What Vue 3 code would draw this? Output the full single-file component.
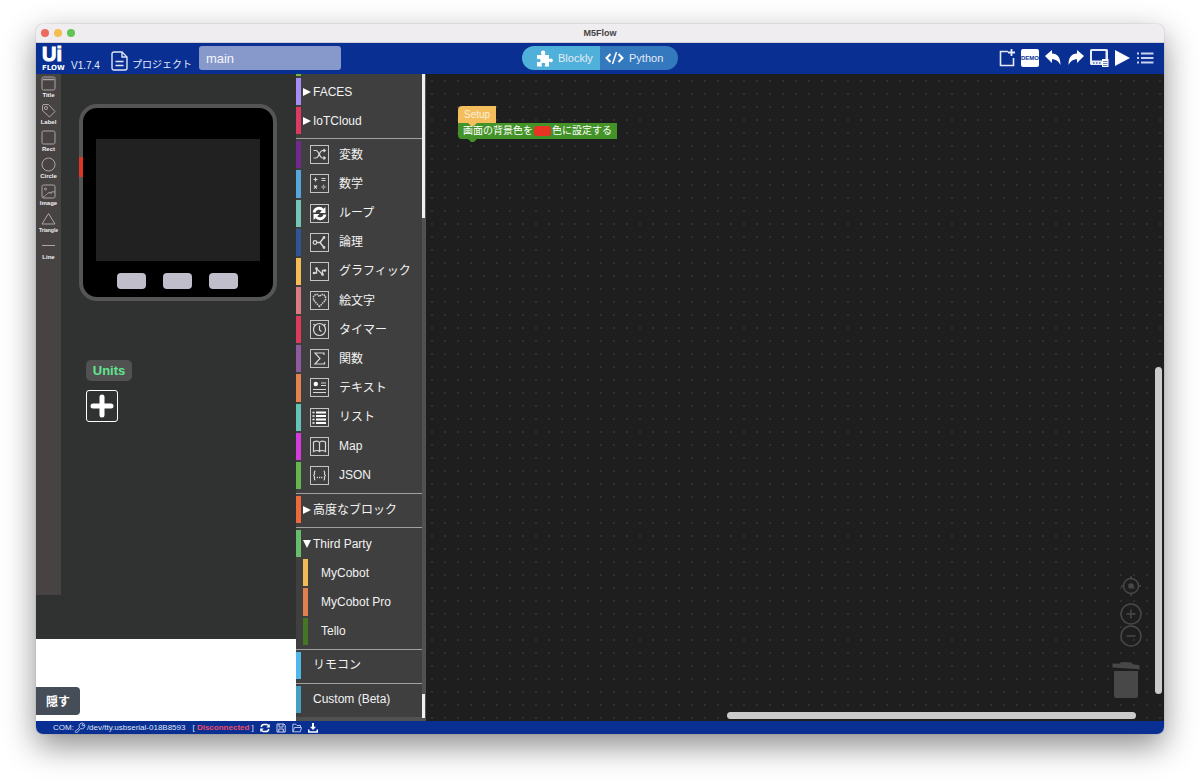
<template>
  <div class="desktop">
    <div class="window">
      <div class="titlebar">
        <div class="lights">
          <span class="light red"></span>
          <span class="light yellow"></span>
          <span class="light green"></span>
        </div>
        <span class="title">M5Flow</span>
      </div>

      <header class="header">
        <div class="header-left">
          <div class="logo">
            <span class="logo-ui">Ui</span>
            <span class="logo-flow">FLOW</span>
          </div>
          <span class="version">V1.7.4</span>
          <label class="project" for="projectName">
            <svg width="17" height="20" viewBox="0 0 17 20" fill="none" stroke="#dfe5f5" stroke-width="1.4">
              <path d="M3 1h8l5 5v11a2 2 0 0 1-2 2H3a2 2 0 0 1-2-2V3a2 2 0 0 1 2-2z" />
              <path d="M11 1v5h5M4.500 10.500h8M4.500 14.500h8" />
            </svg>
            <span>プロジェクト</span>
          </label>
          <input id="projectName" v-model="projectName" class="project-name" type="text" />
        </div>

        <div class="modes">
          <button class="mode" :class="{ active: mode === 'blockly' }" @click="mode = 'blockly'">
            <svg width="17" height="17" viewBox="0 0 17 17" fill="#fff">
              <path d="M1 5h4c.8 0 .6-.8.2-1.500C4.500 2 5.300.500 7.100.500S9.800 2 9.100 3.500C8.700 4.300 8.500 5 9.300 5H13v3.300c0 .9.800.9 1.400.5 1.200-.8 2.400 0 2.400 1.600s-1.300 2.300-2.400 1.500c-.7-.5-1.400-.4-1.400.5V16.500H9.400c-.9 0-.8-.7-.4-1.300.8-1.200 0-2.400-1.600-2.400s-2.400 1.200-1.600 2.400c.4.6.4 1.300-.4 1.300H1v-4.200c0-.8.7-.7 1.200-.3 1.200.8 2.300 0 2.300-1.400S3.400 8.300 2.200 9C1.600 9.400 1 9.300 1 8.600z" />
            </svg>
            <span>Blockly</span>
          </button>
          <button class="mode" :class="{ active: mode === 'python' }" @click="mode = 'python'">
            <svg width="19" height="14" viewBox="0 0 19 14" fill="none" stroke="#fff" stroke-width="2">
              <path d="M5.500 3L1.500 7l4 4M13.500 3l4 4-4 4" />
              <path d="M11.500 1l-4 12" stroke-width="1.500" />
            </svg>
            <span>Python</span>
          </button>
        </div>

        <div class="header-right">
          <button v-for="a in actions" :key="a.name" class="icon-btn" :aria-label="a.name">
            <span v-if="a.name === 'Demo'" class="demo">DEMO</span>
            <svg v-else width="20" height="20" viewBox="0 0 20 20" v-html="a.svg"></svg>
          </button>
        </div>
      </header>

      <main class="main">
        <section class="left">
          <div class="left-top">
            <div class="tools">
              <button v-for="t in tools" :key="t.name" class="tool">
                <svg width="15" height="15" viewBox="0 0 15 15" fill="none" stroke="#a9a6a5" v-html="t.svg"></svg>
                <span :class="{ long: t.name.length > 6 }">{{ t.name }}</span>
              </button>
            </div>
            <div class="stage">
              <div class="device">
                <div class="screen"></div>
                <div class="device-buttons">
                  <span v-for="n in 3" :key="n"></span>
                </div>
              </div>
              <div class="units">Units</div>
              <button class="add-unit" aria-label="Add unit">
                <svg width="24" height="24" viewBox="0 0 24 24" stroke="#fff" stroke-width="5" stroke-linecap="round">
                  <path d="M12 3v18M3 12h18" />
                </svg>
              </button>
            </div>
          </div>
          <div class="left-bottom">
            <button class="hide">隠す</button>
          </div>
        </section>

        <nav class="categories">
          <div class="list">
            <template v-for="c in categories" :key="c.name">
              <hr v-if="c.line" />
              <button class="row" :class="{ child: c.child }">
                <span class="bar" :style="{ background: c.color }"></span>
                <span v-if="c.svg" class="cat-icon">
                  <svg width="17" height="17" viewBox="0 0 17 17" fill="none" stroke="#d8d8d8" stroke-width="1.200" v-html="c.svg"></svg>
                </span>
                <span v-else-if="!c.child" class="arrow">
                  <svg v-if="c.arrow" width="8" height="8" viewBox="0 0 8 8" fill="#fff">
                    <path :d="c.arrow === 'open' ? 'M0 0h8L4 8z' : 'M0 0l8 4-8 4z'" />
                  </svg>
                </span>
                <span class="row-text">{{ c.name }}</span>
              </button>
            </template>
          </div>
          <div class="list-scroll">
            <span class="thumb-top"></span>
            <span class="thumb-bottom"></span>
          </div>
        </nav>

        <section class="workspace">
          <div class="blocks">
            <div class="block setup">Setup</div>
            <div class="block bgcolor">
              <span>画面の背景色を</span>
              <span class="color-field"></span>
              <span>色に設定する</span>
            </div>
          </div>

          <div class="controls">
            <button aria-label="Center">
              <svg width="22" height="22" viewBox="0 0 22 22" fill="none" stroke="#484848" stroke-width="1.500">
                <circle cx="11" cy="11" r="7.500" />
                <circle cx="11" cy="11" r="2.800" fill="#484848" stroke="none" />
                <path d="M11 1v3M11 18v3M1 11h3M18 11h3" />
              </svg>
            </button>
            <button class="zoom-in" aria-label="Zoom in">
              <svg width="22" height="22" viewBox="0 0 22 22" fill="none" stroke="#484848" stroke-width="1.500">
                <circle cx="11" cy="11" r="10" />
                <path d="M6.500 11h9M11 6.500v9" />
              </svg>
            </button>
            <button aria-label="Zoom out">
              <svg width="22" height="22" viewBox="0 0 22 22" fill="none" stroke="#484848" stroke-width="1.500">
                <circle cx="11" cy="11" r="10" />
                <path d="M6.500 11h9" />
              </svg>
            </button>
          </div>
          <svg class="trash" width="28" height="38" viewBox="0 0 28 38" fill="#484848">
            <path d="M.500 2.500l7 .3L8.500 1.500l3-.5 7.500.6 2 1.700 6.500.9v4L.500 6.500z" />
            <path d="M2 10h24v25a2 2 0 0 1-2 2H4a2 2 0 0 1-2-2z" />
          </svg>
          <div class="scroll-v"></div>
          <div class="scroll-h"></div>
        </section>
      </main>

      <footer class="footer">
        <span>COM:</span>
        <svg width="12" height="12" viewBox="0 0 12 12" fill="none" stroke="#b5c2e8" stroke-width="1">
          <path d="M1 9.500L5.500 5.500a3 3 0 0 1 4.200-4L8 3.200l.8.900 1.700-1.500a3 3 0 0 1-4 4L2.500 11z" />
        </svg>
        <span class="port">/dev/tty.usbserial-018B8593</span>
        <span class="status">[ <b>Disconnected</b> ]</span>
        <div class="footer-actions">
          <button v-for="f in footerActions" :key="f.name" :aria-label="f.name">
            <svg width="10" height="10" viewBox="0 0 10 10" fill="none" stroke="#e6ebf8" v-html="f.svg"></svg>
          </button>
        </div>
      </footer>
    </div>
  </div>
</template>

<script setup>
import { ref } from 'vue';

const projectName = ref('main');
const mode = ref('blockly');

const actions = [
  { name: 'New', svg: '<path d="M11 3.500H3.500v14h13V10" fill="none" stroke="#e6ebf8" stroke-width="1.600"/><path d="M14.500 1v7M11 4.500h7" stroke="#e6ebf8" stroke-width="1.800"/>' },
  { name: 'Demo' },
  { name: 'Undo', svg: '<path d="M2 8l7-6v3.500c5.500.2 8.500 4 8.500 11.500C15.500 13 13 11.300 9 11.200V15z" fill="#fff"/>' },
  { name: 'Redo', svg: '<path d="M18 8l-7-6v3.500C5.500 5.700 2.500 9.500 2.500 17c2-4 4.500-5.700 8.500-5.800V15z" fill="#fff"/>' },
  { name: 'Download', svg: '<path d="M2.500 1h15a1.500 1.500 0 0 1 1.500 1.500V11h-6v6H2.500A1.500 1.500 0 0 1 1 15.500v-13A1.500 1.500 0 0 1 2.500 1z" fill="#e6ebf8"/><path d="M3 3h13.500v9.500H3z" fill="#0a2f93"/><path d="M4 15h1.500M7 15h1.500M10 15h1.500" stroke="#0a2f93"/><path d="M13 11h6.500v8H13z" fill="#fff"/><path d="M14 13.500h4.500M14 15.500h4.500M14 17.500h4.500" stroke="#0a2f93" stroke-width=".6"/>' },
  { name: 'Run', svg: '<path d="M3 2l15 8-15 8z" fill="#fff"/>' },
  { name: 'Menu', svg: '<path d="M6 5.500h12.500M6 10h12.500M6 14.500h12.500" stroke="#c9d3ef" stroke-width="1.800"/><path d="M2 5.500h2M2 10h2M2 14.500h2" stroke="#c9d3ef" stroke-width="1.800"/>' },
];

const tools = [
  { name: 'Title', svg: '<rect x="1" y="1" width="13" height="13" rx="1.500"/><path d="M2 3.500h11" stroke-width="1.500"/>' },
  { name: 'Label', svg: '<path d="M1.500 3v4.500L8.500 14 14 8.500 7.500 1.500H3A1.500 1.500 0 0 0 1.500 3z"/><circle cx="5" cy="5" r="1.600"/>' },
  { name: 'Rect', svg: '<rect x="1" y="1" width="13" height="13" rx="1.500"/>' },
  { name: 'Circle', svg: '<circle cx="7.500" cy="7.500" r="6.500"/>' },
  { name: 'Image', svg: '<rect x="1" y="1" width="13" height="13" rx="1.500"/><circle cx="4.500" cy="5" r="1"/><path d="M2 13c2-1 3-2 4.500-3.500s2.500-1.500 4 0M8.500 9.500C10 8 11.500 7.500 14 8"/>' },
  { name: 'Triangle', svg: '<path d="M7.500 2.500L14 13H1z"/>' },
  { name: 'Line', svg: '<path d="M1 7.500h13"/>' },
];

const categories = [
  { name: 'FACES', color: '#a68cf5', arrow: 'closed' },
  { name: 'IoTCloud', color: '#dd3a63', arrow: 'closed' },
  { name: '変数', color: '#712a8c', line: true, svg: '<path d="M2.500 4.500h2.500c3 0 3.500 7.500 6.500 7.500H14M2.500 12H5c3 0 3.500-7.500 6.500-7.500H14M12.500 3l1.800 1.500L12.500 6M12.500 10.500l1.800 1.500-1.800 1.500"/>' },
  { name: '数学', color: '#54a6dc', svg: '<path d="M2.500 4.500h4M4.500 2.500v4M10.500 3.500h4M10.500 5.500h4M3 10.500l3 3M6 10.500l-3 3M10.500 12h4M12.500 9.800v1M12.500 13.200v1"/>' },
  { name: 'ループ', color: '#74c5b5', svg: '<path d="M3 7.500c1-4.500 6-5.500 9-2.500M14 9.500c-1 4.500-6 5.500-9 2.500" stroke="#fff" stroke-width="2.800"/><path d="M14.500 2v6H8.500zM2.500 15V9h6z" fill="#fff" stroke="none"/>' },
  { name: '論理', color: '#2f5596', svg: '<circle cx="4" cy="8.500" r="1.800"/><path d="M6 8.500h3l4-5M9 8.500l4 5" stroke-width="1.500"/><circle cx="13" cy="3.500" r=".8"/><circle cx="13" cy="13.500" r=".8"/>' },
  { name: 'グラフィック', color: '#f5bc55', svg: '<path d="M3 10h2.500V5.500l6 6V7.500H14" stroke-width="1.300"/><g fill="#d8d8d8" stroke="none"><circle cx="3" cy="10" r="1.300"/><circle cx="5.500" cy="5.500" r="1.300"/><circle cx="11.500" cy="11.500" r="1.300"/><circle cx="14" cy="7.500" r="1.300"/></g>' },
  { name: '絵文字', color: '#dc7a83', svg: '<path d="M8.500 14.500L2.500 8V4.500l2-2h2l2 2 2-2h2l2 2V8z" stroke-width="1.500" stroke-dasharray="1.500 .8"/>' },
  { name: 'タイマー', color: '#dd3a5c', svg: '<circle cx="8.500" cy="8.500" r="6"/><path d="M8.500 4.500v4.500l2 1.500M2.500 3L4 4.500M14.500 3L13 4.500"/>' },
  { name: '関数', color: '#8f5b9e', svg: '<path d="M13 5V3H4l5 5.500L4 14h9.500v-2"/>' },
  { name: 'テキスト', color: '#e38350', svg: '<circle cx="4.800" cy="5" r="2.200" fill="#fff" stroke="none"/><path d="M10 4h5M10 6.500h5M2 10.500h13M2 13.500h13"/>' },
  { name: 'リスト', color: '#64c3b8', svg: '<path d="M5 3.500h10M5 7h10M5 10.500h10M5 14h10" stroke="#fff" stroke-width="2"/><path d="M1.500 3.500h2M1.500 7h2M1.500 10.500h2M1.500 14h2" stroke="#fff" stroke-width="1.500"/>' },
  { name: 'Map', color: '#d63bdc', svg: '<path d="M8.500 4.500C7.500 3 5.500 2.500 2.500 4v9.500c3-1.500 5-1 6 0 1-1 3-1.500 6 0V4c-3-1.500-5-1-6 .5zM8.500 4.500v9"/>' },
  { name: 'JSON', color: '#65b550', svg: '<path d="M4.500 4C3 4 3.500 5.500 3.500 7c0 1-.5 1.500-1.500 1.500 1 0 1.500.5 1.500 1.500 0 1.500-.5 3 1 3M12.500 4c1.500 0 1 1.500 1 3 0 1 .5 1.500 1.500 1.500-1 0-1.500.5-1.500 1.500 0 1.500.5 3-1 3"/><path d="M5.800 10.500h1.200M8 10.500h1.200M10.200 10.500h1.200" stroke-width="1.500"/>' },
  { name: '高度なブロック', color: '#ee6a3d', line: true, arrow: 'closed' },
  { name: 'Third Party', color: '#67bd6b', line: true, arrow: 'open' },
  { name: 'MyCobot', color: '#f3bb55', child: true },
  { name: 'MyCobot Pro', color: '#e18150', child: true },
  { name: 'Tello', color: '#447624', child: true },
  { name: 'リモコン', color: '#51b6ea', line: true },
  { name: 'Custom (Beta)', color: '#459fc0', line: true },
];

const footerActions = [
  { name: 'Refresh', svg: '<path d="M1.200 4c.3-1.700 1.300-2.500 2.800-2.500h2.500c1 0 1.800.5 2.200 1.500M8.800 6c-.3 1.700-1.300 2.500-2.800 2.500H3.500C2.500 8.500 1.700 8 1.300 7" stroke="#fff" stroke-width="1.500"/><path d="M9.800 1v3.500H6.300zM.2 9V5.500h3.500z" fill="#fff" stroke="none"/>' },
  { name: 'Save', svg: '<path d="M1 1h7l1.200 1.200V9H1zM3 1v3h4V1M2.800 9V6h4.500v3" stroke="#c5cfee"/>' },
  { name: 'Open', svg: '<path d="M.8 8.800V1.200h3L5 2.500h3.500v2M.8 8.800L2.500 4.500h7L8.300 8.800z" stroke="#c5cfee" stroke-width=".9"/>' },
  { name: 'Install', svg: '<path d="M5 0v5" stroke="#fff" stroke-width="2"/><path d="M2 3.800h6L5 7z" fill="#fff" stroke="none"/><path d="M.700 6.500V9h8.600V6.500" stroke="#fff" stroke-width="1.500"/>' },
];
</script>

<style>
body {
  margin: 0;
  background: #fff;
}
</style>

<style scoped>
* {
  box-sizing: border-box;
}

.desktop {
  height: 100vh;
  padding: 24px 36px 48px;
  overflow: hidden;
  font-family: "Liberation Sans", "Noto Sans CJK JP", sans-serif;
}

button {
  border: 0;
  padding: 0;
  margin: 0;
  background: none;
  font-family: inherit;
  color: inherit;
  cursor: pointer;
}

svg {
  display: block;
  flex: none;
}

.window {
  display: flex;
  flex-direction: column;
  height: 100%;
  border-radius: 7px;
  overflow: hidden;
  box-shadow: 0 0 1px rgba(0, 0, 0, 0.5), 0 12px 32px rgba(0, 0, 0, 0.45);
}

.titlebar {
  display: grid;
  grid-template-columns: 1fr auto 1fr;
  align-items: center;
  height: 19px;
  padding: 0 5px;
  background: #efedef;
  border-bottom: 1px solid #cfcdd4;
}

.lights {
  display: flex;
  gap: 5px;
}

.light {
  width: 8px;
  height: 8px;
  border-radius: 50%;
}

.light.red { background: #ec6b5f; }
.light.yellow { background: #f4be4f; }
.light.green { background: #61c555; }

.title {
  font-size: 9px;
  font-weight: bold;
  color: #454345;
}

.header {
  display: grid;
  grid-template-columns: 1fr auto 1fr;
  align-items: center;
  height: 31px;
  padding-bottom: 1px;
  background: #0a2f93;
  color: #e6ebf8;
}

.header-left {
  display: flex;
  align-items: center;
  height: 30px;
  padding-left: 6px;
}

.logo {
  display: flex;
  flex-direction: column;
  width: 24px;
  color: #fff;
  font-weight: bold;
}

.logo-ui {
  font-size: 20px;
  line-height: 19px;
  -webkit-text-stroke: 1px #fff;
}

.logo-flow {
  font-family: "DejaVu Sans", sans-serif;
  font-size: 7px;
  line-height: 8px;
}

.version {
  align-self: flex-end;
  margin-left: 5px;
  font-size: 10px;
  line-height: 14px;
}

.project {
  display: flex;
  align-items: flex-end;
  gap: 4px;
  height: 100%;
  margin-left: 11px;
  padding-bottom: 2px;
  font-size: 10px;
  line-height: 12px;
}

.project-name {
  width: 142px;
  height: 24px;
  margin-left: 7px;
  padding: 0 7px;
  border: 0;
  border-radius: 3px;
  background: #8799ca;
  color: #f4f6fc;
  font-family: inherit;
  font-size: 13px;
}

.modes {
  display: flex;
  height: 24px;
  border-radius: 12px;
  overflow: hidden;
}

.mode {
  display: flex;
  align-items: center;
  gap: 5px;
  width: 78px;
  padding-left: 5px;
  background: #3478bd;
  font-size: 11px;
}

.mode:first-child {
  padding-left: 14px;
}

.mode.active {
  background: #4fb0d9;
}

.header-right {
  display: flex;
  justify-content: flex-end;
  gap: 3px;
  padding-right: 9px;
}

.icon-btn {
  display: flex;
  align-items: center;
  justify-content: center;
  width: 20px;
  height: 20px;
}

.demo {
  width: 18px;
  border-radius: 2px;
  background: #fff;
  color: #0a2f93;
  font-size: 6px;
  font-weight: bold;
  line-height: 18px;
}

.main {
  display: flex;
  flex: 1;
  min-height: 0;
}

.left {
  display: flex;
  flex-direction: column;
  width: 260px;
}

.left-top {
  display: flex;
  flex: 1;
  background: #303231;
}

.tools {
  display: flex;
  flex-direction: column;
  width: 25px;
  margin-bottom: 44px;
  padding-top: 2px;
  background: #474342;
}

.tool {
  display: flex;
  flex-direction: column;
  align-items: center;
  justify-content: flex-start;
  height: 27px;
  padding-bottom: 3px;
  color: #f0f0f0;
  font-size: 6px;
  font-weight: bold;
  line-height: 8px;
}

.long {
  font-size: 5px;
}

.stage {
  flex: 1;
  padding: 30px 18px 0;
}

.device {
  position: relative;
  width: 198px;
  height: 197px;
  padding: 31px 13px 0;
  border: 4px solid #555;
  border-radius: 18px;
  background: #000;
}

/* power switch on the left edge */
.device::before {
  content: "";
  position: absolute;
  left: -4px;
  top: 49px;
  width: 4px;
  height: 20px;
  background: #dd3526;
}

.screen {
  height: 122px;
  background: #212121;
}

.device-buttons {
  display: flex;
  gap: 17px;
  padding: 12px 0 0 21px;
}

.device-buttons span {
  width: 29px;
  height: 16px;
  border-radius: 4px;
  background: #c0becb;
}

.units {
  width: 46px;
  margin: 59px 0 0 7px;
  border-radius: 5px;
  background: #515151;
  color: #62e58e;
  font-size: 13px;
  font-weight: bold;
  line-height: 21px;
  text-align: center;
}

.add-unit {
  display: flex;
  align-items: center;
  justify-content: center;
  width: 32px;
  height: 32px;
  margin: 9px 0 0 7px;
  border: 1px solid #fff;
  border-radius: 3px;
}

.left-bottom {
  display: flex;
  align-items: flex-end;
  height: 82px;
  padding-bottom: 6px;
  background: #fff;
}

.hide {
  width: 44px;
  height: 28px;
  padding-bottom: 2px;
  border-radius: 0 4px 4px 0;
  background: #454e58;
  color: #fff;
  font-size: 12px;
  font-weight: bold;
}

.categories {
  display: flex;
  width: 130px;
  background: #3f3f3f;
}

.list {
  display: flex;
  flex: 1;
  flex-direction: column;
  padding: 4px 0 2px;
  border-bottom: 4px solid #515151;
  background: linear-gradient(#76b82f, #76b82f) 0 0 / 5px 2px no-repeat;
}

.list hr {
  width: 100%;
  height: 1px;
  margin: 2px 0;
  border: 0;
  background: #a0a0a0;
}

.row {
  display: flex;
  flex: 1;
  align-items: center;
  min-height: 0;
  padding-bottom: 2px;
  color: #f2f2f2;
  font-size: 12px;
  line-height: 18px;
  text-align: left;
}

.bar {
  align-self: stretch;
  width: 5px;
}

.arrow {
  width: 8px;
  margin: 0 2px;
}

.cat-icon {
  margin: 0 10px 0 9px;
  border: 1px solid #c4c4c4;
}

.child {
  padding-left: 7px;
}

.child .bar {
  margin-right: 13px;
}

.list-scroll {
  display: flex;
  flex-direction: column;
  justify-content: space-between;
  width: 4px;
  padding-bottom: 3px;
  background: #515151;
}

.thumb-top,
.thumb-bottom {
  width: 3px;
  height: 144px;
  background: #eee;
}

.thumb-bottom {
  height: 24px;
}

.workspace {
  position: relative;
  flex: 1;
  background-color: #1e1e1e;
  background-image: radial-gradient(circle at 6px 7px, #303030 0, #303030 1px, transparent 1px);
  background-size: 13px 13px;
}

.blocks {
  position: absolute;
  left: 32px;
  top: 32px;
}

.block {
  position: relative;
  display: flex;
  align-items: center;
  width: max-content;
  height: 17px;
  padding: 0 6px;
  font-size: 10px;
  line-height: 16px;
  color: #fff;
}

.block::after {
  content: "";
  position: absolute;
  left: 10px;
  top: 100%;
  z-index: 1;
  width: 9px;
  height: 3px;
  background: inherit;
  clip-path: polygon(0 0, 100% 0, 65% 100%, 35% 100%);
}

.setup {
  border-radius: 4px 0 0 0;
  background: #f3be5b;
  color: #fdf1d8;
}

.bgcolor {
  height: 16px;
  padding: 0 5px;
  border-radius: 0 0 0 4px;
  background: #439329;
}

.color-field {
  width: 17px;
  height: 10px;
  margin: 0 1px;
  border-radius: 3px;
  background: #e93323;
}

.controls {
  position: absolute;
  right: 22px;
  bottom: 74px;
  display: flex;
  flex-direction: column;
}

.zoom-in {
  margin-top: 6px;
}

.trash {
  position: absolute;
  right: 24px;
  bottom: 22px;
}

.scroll-v,
.scroll-h {
  position: absolute;
  border-radius: 4px;
  background: #cbcbcb;
}

.scroll-v {
  right: 2px;
  top: 293px;
  bottom: 27px;
  width: 7px;
}

.scroll-h {
  left: 301px;
  right: 28px;
  bottom: 2px;
  height: 7px;
}

.footer {
  display: flex;
  align-items: center;
  height: 13px;
  padding-left: 17px;
  background: #0a2f93;
  color: #dfe5f5;
  font-size: 8px;
  line-height: 13px;
}

.port {
  margin-left: 1px;
}

.status {
  margin-left: 7px;
}

.status b {
  color: #ec4c66;
}

.footer-actions {
  display: flex;
  gap: 6px;
  margin-left: 6px;
}
</style>
